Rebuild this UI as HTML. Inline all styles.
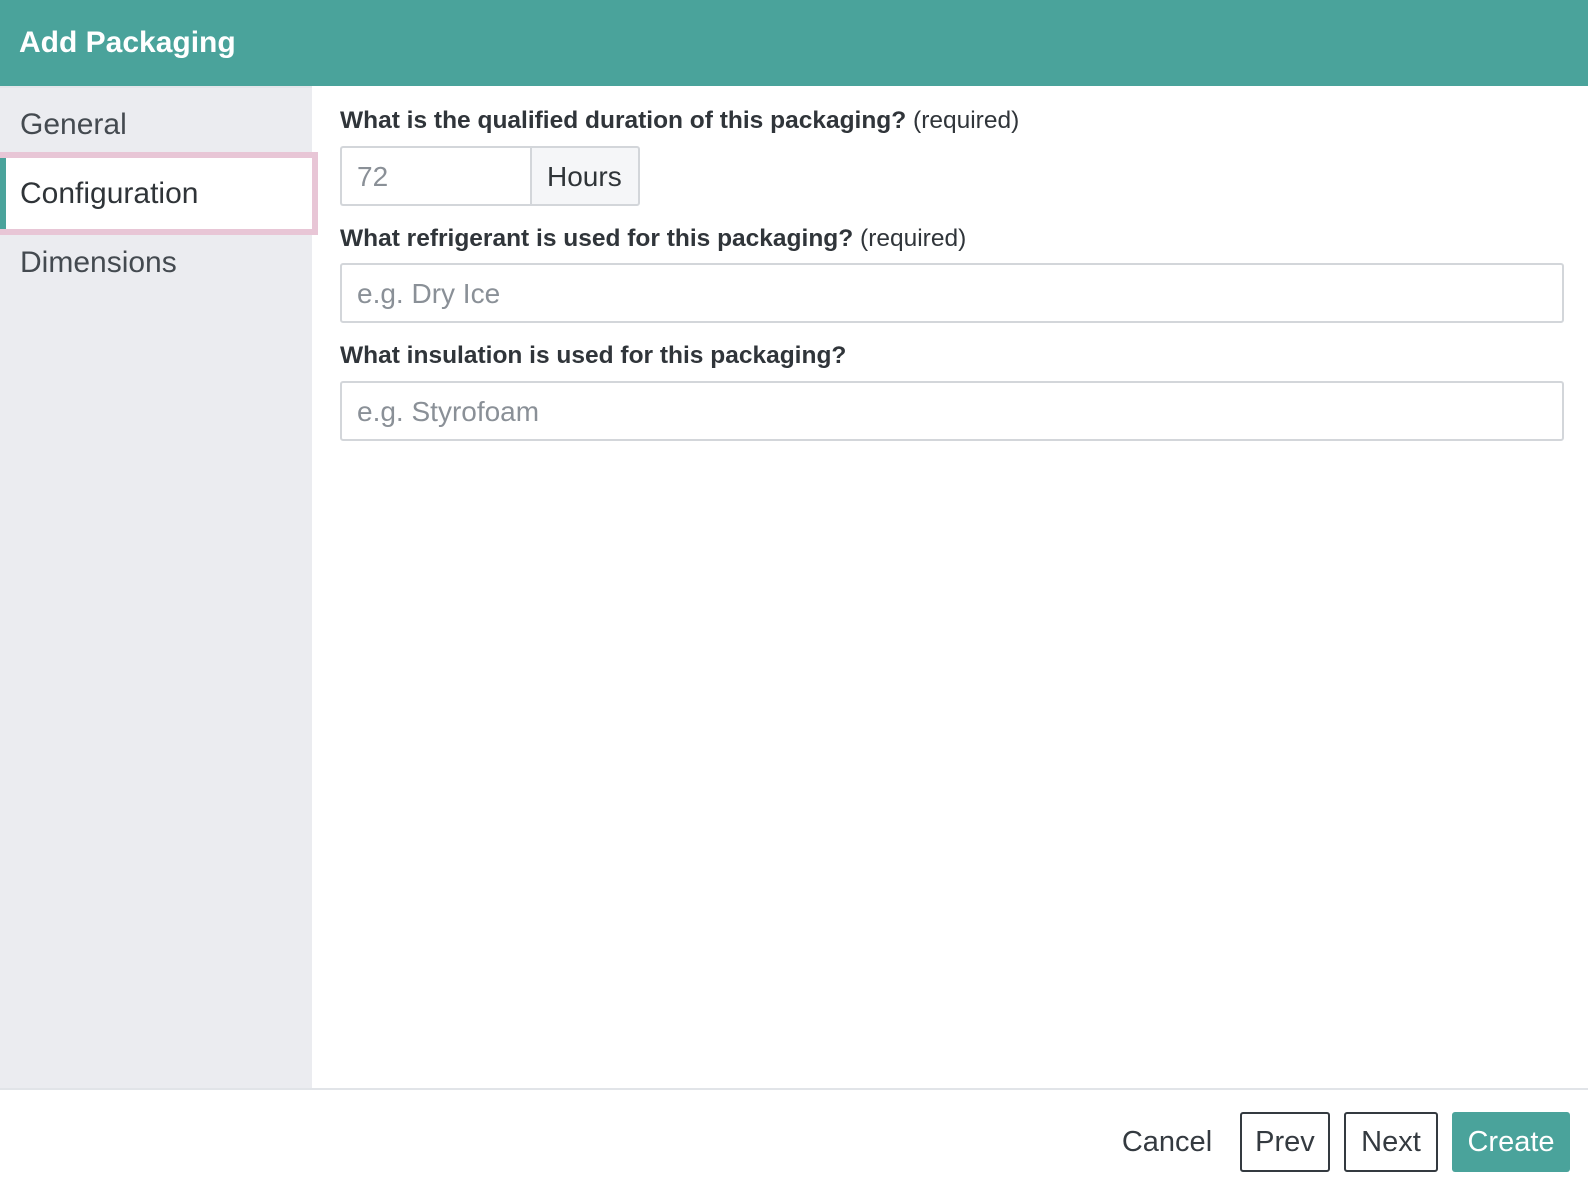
<!DOCTYPE html><html><head><style>
*{box-sizing:border-box;margin:0;padding:0}
body{width:1588px;height:1182px;background:#fff;font-family:"Liberation Sans",sans-serif;color:#343a40;position:relative;overflow:hidden}
.hdr{position:absolute;left:0;top:0;width:1588px;height:86px;background:#4aa39b;color:#fff;font-weight:bold;font-size:30px;padding:26px 0 0 19px}
.side{position:absolute;left:0;top:86px;width:312px;height:1003px;background:#ebecf0;border-top:2px solid #e4e6ea}
.it{position:absolute;left:20px;font-size:30px;color:#444a50}
.cfg{position:absolute;left:0;top:152px;width:318px;height:83px;border:6px solid #e8c6d6;border-left:none;background:#fff}
.cfg:before{content:"";position:absolute;left:0;top:0;width:6px;height:71px;background:#4aa39b}
.lbl{position:absolute;left:340px;font-size:24.5px;font-weight:bold;color:#30353a}
.lbl span{font-weight:normal}
.inp{position:absolute;border:2px solid #d3d6da;border-radius:3px;font-size:28px;color:#8a9097;padding:13px 0 0 15px}
.foot{position:absolute;left:0;top:1088px;width:1588px;border-top:2px solid #e1e4e8}
.btn{position:absolute;top:1112px;height:60px;font-size:29px;text-align:center;line-height:60px;border-radius:3px}
</style></head><body>
<div class="hdr">Add Packaging</div>
<div class="side"></div>
<div class="it" style="top:108px">General</div>
<div class="cfg"></div>
<div class="it" style="top:177px;color:#2f3438">Configuration</div>
<div class="it" style="top:246px">Dimensions</div>
<div class="lbl" style="top:107px">What is the qualified duration of this packaging? <span>(required)</span></div>
<div class="inp" style="left:340px;top:146px;width:192px;height:60px;border-right:none;border-radius:3px 0 0 3px">72</div>
<div class="inp" style="left:530px;top:146px;width:110px;height:60px;background:#f5f6f8;color:#2f3438;border-radius:0 3px 3px 0">Hours</div>
<div class="lbl" style="top:225px">What refrigerant is used for this packaging? <span>(required)</span></div>
<div class="inp" style="left:340px;top:263px;width:1224px;height:60px">e.g. Dry Ice</div>
<div class="lbl" style="top:342px">What insulation is used for this packaging?</div>
<div class="inp" style="left:340px;top:381px;width:1224px;height:60px">e.g. Styrofoam</div>
<div class="foot"></div>
<div class="btn" style="left:1114px;width:106px;color:#343a40">Cancel</div>
<div class="btn" style="left:1240px;width:90px;border:2px solid #343a40;line-height:56px">Prev</div>
<div class="btn" style="left:1344px;width:94px;border:2px solid #343a40;line-height:56px">Next</div>
<div class="btn" style="left:1452px;width:118px;background:#4aa39b;color:#fff">Create</div>
</body></html>
